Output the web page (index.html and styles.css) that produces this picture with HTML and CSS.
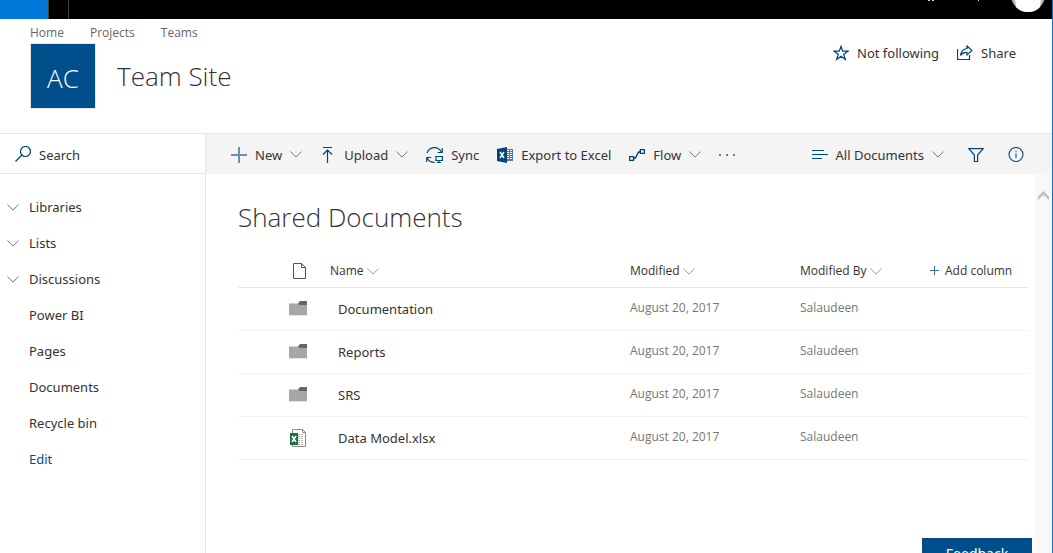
FILE: index.html
```html
<!DOCTYPE html>
<html lang="en">
<head>
    <meta charset="UTF-8">
    <meta name="viewport" content="width=device-width, initial-scale=1.0">
    <title>Team Site - Shared Documents</title>
    <link rel="stylesheet" href="styles.css">
</head>
<body>

<!-- shared icons -->
<svg class="sprite" aria-hidden="true">
    <symbol id="chevron" viewBox="0 0 12 7"><path d="M.4.5 6 6.1 11.6.5" fill="none" stroke="currentColor"/></symbol>
    <symbol id="folder" viewBox="0 0 18 15">
        <path d="M0 2.500h18V14H0z" fill="#a6a6a6"/>
        <path d="M9 2.200 11 0h7v4h-7.500z" fill="#666"/>
        <path d="M0 14h18v1H0z" fill="#e3e3e3"/>
    </symbol>
</svg>

<div class="suite-bar">
    <div class="app-launcher"></div>
    <div class="suite-brand"></div>
    <svg class="suite-icons" width="54" height="19" viewBox="0 0 54 19"><path d="M2 0h2v1H2zM6 0h2v1H6zM52 0h1v1h-1z" fill="#ddd"/></svg>
    <svg class="avatar" width="34" height="34" viewBox="0 0 34 34">
        <circle cx="17" cy="17" r="17" fill="#b5b5b5"/>
        <path d="M4 21q13-6 26 0l-1 8q-4 5-12 5T5 29z" fill="#fff"/>
    </svg>
</div>

<header class="site-header">
    <div class="site-info">
        <nav class="hub-nav">
            <a href="#">Home</a>
            <a href="#">Projects</a>
            <a href="#">Teams</a>
        </nav>
        <div class="site-title">
            <div class="site-logo">AC</div>
            <h1>Team Site</h1>
        </div>
    </div>
    <div class="site-actions">
        <button type="button">
            <svg width="16" height="16" viewBox="0 0 16 16"><path d="M8 1.300 9.700 6.200H15L10.700 9.300 12.400 14.500 8 11.300 3.600 14.500 5.300 9.300 1 6.200H6.300z" fill="none" stroke="currentColor" stroke-width="1.200"/></svg>
            Not following
        </button>
        <button type="button">
            <svg width="16" height="16" viewBox="0 0 16 16"><path d="M.500 4v10.500h12V10M10 1l5 4.500-5 4.500V7.500Q6 7.200 3.500 10.500 4.500 4.200 10 3.500z" fill="none" stroke="currentColor" stroke-width="1.200"/></svg>
            Share
        </button>
    </div>
</header>

<div class="page">
    <aside class="sidebar">
        <div class="search">
            <label for="search" aria-label="Search">
                <svg width="16" height="16" viewBox="0 0 16 16"><circle cx="10.500" cy="5.500" r="5" fill="none" stroke="currentColor" stroke-width="1.200"/><path d="M7 9 .500 15.500" stroke="currentColor" stroke-width="1.300"/></svg>
            </label>
            <input type="text" id="search" placeholder="Search">
        </div>
        <nav class="side-nav">
            <button type="button"><svg class="chevron"><use href="#chevron"/></svg>Libraries</button>
            <button type="button"><svg class="chevron"><use href="#chevron"/></svg>Lists</button>
            <button type="button"><svg class="chevron"><use href="#chevron"/></svg>Discussions</button>
            <a href="#">Power BI</a>
            <a href="#">Pages</a>
            <a href="#">Documents</a>
            <a href="#">Recycle bin</a>
            <a href="#" class="edit">Edit</a>
        </nav>
    </aside>

    <main class="content">
        <div class="command-bar">
            <button type="button">
                <svg width="16" height="16" viewBox="0 0 16 16"><path d="M0 8h16M8 0v16" stroke="#6c90b2" stroke-width="2"/></svg>
                New
                <svg class="chevron"><use href="#chevron"/></svg>
            </button>
            <button type="button">
                <svg width="16" height="16" viewBox="0 0 16 16"><path d="M3 .500h9M7.500 16V3M3 7.500 7.500 3 12 7.500" fill="none" stroke="currentColor" stroke-width="1.200"/></svg>
                Upload
                <svg class="chevron"><use href="#chevron"/></svg>
            </button>
            <button type="button">
                <svg width="17" height="16" viewBox="0 0 17 16"><path d="M1 6Q3 .600 8.500.600 13 .600 15.500 5M16.200 1v4.500h-4.500M.700 15v-4.500h4.500M1.200 11Q3 15.400 8.500 15.400M10 9.500h6.400v4H10zM13 13.500v2M11 15.500h4" fill="none" stroke="currentColor" stroke-width="1.200"/></svg>
                Sync
            </button>
            <button type="button">
                <svg width="16" height="16" viewBox="0 0 16 16">
                    <path d="M9 2h7v12H9z" fill="#4f7ba3"/>
                    <path d="M10 3.500h2M13 3.500h2M10 5.500h2M13 5.500h2M10 7.500h2M13 7.500h2M10 9.500h2M13 9.500h2M10 11.500h2M13 11.500h2" stroke="#fff"/>
                    <path d="M0 2 10 0v16L0 14z" fill="#00457c"/>
                    <path d="m3 5 4 6M7 5l-4 6" stroke="#fff" stroke-width="1.400"/>
                </svg>
                Export to Excel
            </button>
            <button type="button">
                <svg width="16" height="16" viewBox="0 0 16 16"><path d="M.600 9.600h4v3.800h-4zM11.400 2.600h4v3.800h-4zM4.600 11.500C9 11.500 7 4.500 11.400 4.500" fill="none" stroke="currentColor" stroke-width="1.300"/></svg>
                Flow
                <svg class="chevron"><use href="#chevron"/></svg>
            </button>
            <button type="button" aria-label="More">
                <svg width="16" height="16" viewBox="0 0 16 16"><path d="M0 7h2v2H0zM7 7h2v2H7zM14 7h2v2h-2z" fill="#777"/></svg>
            </button>

            <button type="button" class="view">
                <svg width="16" height="16" viewBox="0 0 16 16"><path d="M0 3.500h12M0 7.500h16M0 11.500h10" stroke="currentColor"/></svg>
                All Documents
                <svg class="chevron"><use href="#chevron"/></svg>
            </button>
            <button type="button" class="tool" aria-label="Filter">
                <svg width="16" height="16" viewBox="0 0 16 16"><path d="M.800 1.600h14.400L9.600 8v6.500H6.400V8z" fill="none" stroke="currentColor" stroke-width="1.200"/></svg>
            </button>
            <button type="button" class="tool" aria-label="Details">
                <svg width="16" height="16" viewBox="0 0 16 16"><circle cx="8" cy="7.500" r="7" fill="none" stroke="currentColor" stroke-width="1.100"/><path d="M7.500 4h1v1.300h-1zM7.500 6.500h1V11h-1z" fill="currentColor"/></svg>
            </button>
        </div>

        <div class="library">
            <section class="documents">
                <h2>Shared Documents</h2>
                <table>
                    <thead>
                        <tr>
                            <th class="col-type"><svg width="18" height="16" viewBox="0 0 18 16"><path d="M4.500.500h8l4 4v11h-12zM12.500.500v4h4" fill="none" stroke="#555"/></svg></th>
                            <th>Name <svg class="chevron"><use href="#chevron"/></svg></th>
                            <th class="col-modified">Modified <svg class="chevron"><use href="#chevron"/></svg></th>
                            <th class="col-author">Modified By <svg class="chevron"><use href="#chevron"/></svg></th>
                            <th class="col-add"><button type="button"><svg width="9" height="9" viewBox="0 0 9 9"><path d="M0 4.500h9M4.500 0v9" stroke="#37709f"/></svg>Add column</button></th>
                        </tr>
                    </thead>
                    <tbody>
                        <tr>
                            <td class="col-type"><svg width="18" height="15"><use href="#folder"/></svg></td>
                            <td class="name"><a href="#">Documentation</a></td>
                            <td>August 20, 2017</td>
                            <td>Salaudeen</td>
                            <td></td>
                        </tr>
                        <tr>
                            <td class="col-type"><svg width="18" height="15"><use href="#folder"/></svg></td>
                            <td class="name"><a href="#">Reports</a></td>
                            <td>August 20, 2017</td>
                            <td>Salaudeen</td>
                            <td></td>
                        </tr>
                        <tr>
                            <td class="col-type"><svg width="18" height="15"><use href="#folder"/></svg></td>
                            <td class="name"><a href="#">SRS</a></td>
                            <td>August 20, 2017</td>
                            <td>Salaudeen</td>
                            <td></td>
                        </tr>
                        <tr>
                            <td class="col-type">
                                <svg width="18" height="18" viewBox="0 0 18 18">
                                    <path d="M3.500.500h10l3 3v14h-13z" fill="#fff" stroke="#8c8c8c"/>
                                    <path d="M13.500.500v3h3" fill="none" stroke="#8c8c8c"/>
                                    <path d="M9 5.500h6M9 7.500h6M9 9.500h6M9 11.500h6M9 13.500h6M9 15.500h6" stroke="#b5b5b5" stroke-dasharray="2 1"/>
                                    <path d="M1 4h8v12H1z" fill="#1e7145"/>
                                    <path d="m3 7 4 6M7 7l-4 6" stroke="#fff" stroke-width="1.500"/>
                                </svg>
                            </td>
                            <td class="name"><a href="#">Data Model.xlsx</a></td>
                            <td>August 20, 2017</td>
                            <td>Salaudeen</td>
                            <td></td>
                        </tr>
                    </tbody>
                </table>
            </section>
            <div class="scroll-track">
                <svg width="11" height="9" viewBox="0 0 11 9"><path d="M0 9V5.500L5.500 0 11 5.500V9L5.500 3.800z" fill="#bfbfbf"/></svg>
            </div>
        </div>
    </main>
</div>

<button type="button" class="feedback">Feedback</button>

</body>
</html>
```
FILE: styles.css
```css
* {
    box-sizing: border-box;
}

body {
    margin: 0;
    height: 100vh;
    display: flex;
    flex-direction: column;
    overflow: hidden;
    border-right: 1px solid #0078d7;
    background-color: #fff;
    color: #333;
    font-family: 'Segoe UI', 'Noto Sans', sans-serif;
    font-size: 13px;
    line-height: 20px;
}

a {
    color: inherit;
    text-decoration: none;
}

button {
    display: flex;
    align-items: center;
    gap: 8px;
    padding: 0;
    border: none;
    background: none;
    color: inherit;
    font: inherit;
    white-space: nowrap;
    cursor: pointer;
}

svg {
    flex: none;
    color: #004578;
}

.sprite {
    position: absolute;
    width: 0;
    height: 0;
}

.chevron {
    width: 12px;
    height: 7px;
    color: #777;
}

/* top bar */
.suite-bar {
    flex: none;
    display: flex;
    align-items: flex-end;
    height: 19px;
    padding-right: 7px;
    background-color: #000;
    overflow: hidden;
}

.app-launcher {
    width: 48px;
    height: 100%;
    background-color: #0078d7;
}

.suite-brand {
    width: 21px;
    height: 100%;
    border: solid #444;
    border-width: 0 1px;
}

.suite-icons {
    margin-left: auto;
    margin-right: 31px;
}

.avatar {
    margin-bottom: 7px;
}

/* site header */
.site-header {
    flex: none;
    display: flex;
    justify-content: space-between;
    height: 115px;
    padding: 4px 36px 0 30px;
    border-bottom: 1px solid #e6e6e6;
}

.hub-nav {
    display: flex;
    gap: 26px;
    color: #666;
    font-family: 'Segoe UI', 'Open Sans', sans-serif;
    font-size: 12px;
}

.site-title {
    display: flex;
    align-items: center;
    gap: 21px;
}

.site-logo {
    width: 66px;
    height: 66px;
    border: 1px solid #e6e6e6;
    background-color: #004e8c;
    color: #fff;
    font-family: 'Segoe UI', 'Open Sans', sans-serif;
    font-size: 26px;
    font-weight: 300;
    line-height: 68px;
    text-align: center;
}

h1, h2 {
    margin: 0;
    font-family: 'Segoe UI', 'Open Sans', sans-serif;
    font-size: 26px;
    font-weight: 300;
    line-height: 36px;
}

.site-actions {
    display: flex;
    align-items: flex-start;
    gap: 18px;
    padding-top: 20px;
}

/* sidebar */
.page {
    flex: 1;
    display: flex;
    min-height: 0;
}

.sidebar {
    flex: none;
    width: 206px;
    border-right: 1px solid #e6e6e6;
}

.search {
    display: flex;
    align-items: center;
    gap: 8px;
    height: 40px;
    padding: 0 15px;
    border-bottom: 1px solid #e6e6e6;
}

.search label {
    display: flex;
}

.search input {
    width: 100%;
    padding: 2px 0 0;
    border: none;
    outline: none;
    background: none;
    color: #333;
    font: inherit;
}

.search input::placeholder {
    color: #333;
    opacity: 1;
}

.side-nav {
    padding-top: 15px;
}

.side-nav a,
.side-nav button {
    display: flex;
    align-items: center;
    gap: 10px;
    width: 100%;
    height: 36px;
}

.side-nav button {
    padding-left: 7px;
}

.side-nav a {
    padding-left: 29px;
}

.side-nav .edit {
    color: #004e8c;
}

/* command bar */
.content {
    flex: 1;
    display: flex;
    flex-direction: column;
    min-width: 0;
}

.command-bar {
    flex: none;
    display: flex;
    align-items: center;
    gap: 18px;
    height: 40px;
    padding: 1px 28px 0 25px;
    background-color: #f4f4f4;
}

.command-bar .view {
    margin-left: auto;
}

.command-bar .tool {
    margin-left: 6px;
}

/* document list */
.library {
    flex: 1;
    display: flex;
    min-height: 0;
}

.documents {
    flex: 1;
    padding: 25px 7px 0 32px;
}

.scroll-track {
    flex: none;
    width: 17px;
    padding: 17px 3px;
    background-color: #f8f8f8;
}

.scroll-track svg {
    display: block;
}

table {
    width: 100%;
    margin-top: 21px;
    border-collapse: collapse;
    table-layout: fixed;
    font-family: 'Segoe UI', 'Open Sans', sans-serif;
    font-size: 12px;
}

th {
    height: 31px;
    padding: 0 0 1px;
    border-bottom: 1px solid #e6e6e6;
    font-weight: 400;
    text-align: left;
    white-space: nowrap;
}

td {
    height: 43px;
    padding: 0 0 2px;
    border-bottom: 1px solid #f2f2f2;
    color: #767676;
}

th .chevron {
    color: #999;
}

.col-type {
    width: 92px;
    padding: 0 0 0 51px;
}

.col-type svg {
    display: block;
}

.col-modified {
    width: 170px;
}

.col-author {
    width: 130px;
}

.col-add {
    width: 98px;
}

.col-add button {
    gap: 6px;
}

.name {
    padding: 0 0 0 8px;
    color: #333;
    font-family: 'Segoe UI', 'Noto Sans', sans-serif;
    font-size: 13px;
}

/* hangs off the bottom edge of the window */
.feedback {
    position: fixed;
    right: 21px;
    bottom: -17px;
    justify-content: center;
    width: 110px;
    height: 32px;
    background-color: #004e8c;
    color: #fff;
    font-size: 14px;
}
```
